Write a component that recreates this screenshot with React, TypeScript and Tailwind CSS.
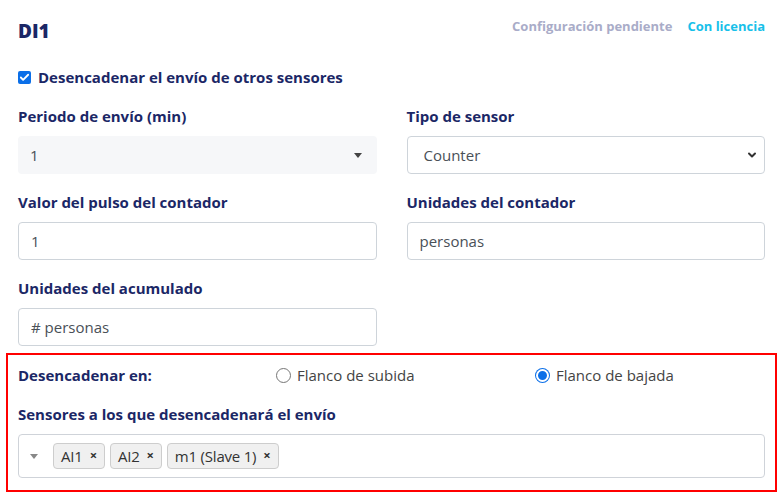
import { Check, ChevronDown } from "lucide-react";

const navy = "text-[#1b2766]";
const heading = "font-['Open_Sans',sans-serif]";

function Label({ children }: { children: React.ReactNode }) {
  return (
    <div className={`h-5 mb-[10px] text-[15px] leading-5 font-bold ${navy} ${heading}`}>
      {children}
    </div>
  );
}

function TextInput({ value }: { value: string }) {
  return (
    <div className="h-[38px] flex items-center px-[12px] border border-[#ced4da] rounded-[4px] bg-white text-[15px] text-[#495057]">
      {value}
    </div>
  );
}

function Caret({ className }: { className: string }) {
  return (
    <svg width="8" height="5" viewBox="0 0 8 5" className={className}>
      <path d="M0 0h8L4 5z" fill="currentColor" />
    </svg>
  );
}

function Tag({ label }: { label: string }) {
  return (
    <span className="h-[26px] flex items-center gap-[7px] px-[7px] border border-[#cdcdcd] rounded-[4px] bg-[#f0f0f0] text-[15px] tracking-[-0.2px] text-[#333]">
      {label}
      <span className="text-[13px] font-bold text-[#333]">×</span>
    </span>
  );
}

function Radio({ checked, label }: { checked?: boolean; label: string }) {
  return (
    <div className="flex items-center gap-[6px] text-[15px] text-[#444]">
      {checked ? (
        <span className="w-[15px] h-[15px] rounded-full bg-[#0b6fe8] flex items-center justify-center">
          <span className="w-[9px] h-[9px] rounded-full bg-[#0b6fe8] border-[2px] border-white box-content" />
        </span>
      ) : (
        <span className="w-[15px] h-[15px] rounded-full border border-[#767676] bg-white" />
      )}
      {label}
    </div>
  );
}

export default function App() {
  return (
    <div className="w-[781px] h-[503px] bg-white pl-[18px] pr-[16px] font-['Open_Sans',sans-serif] overflow-hidden">
      {/* Header */}
      <div className="flex items-center justify-between h-[60px] pt-[2px]">
        <h1 className={`text-[19px] font-extrabold ${navy} ${heading}`}>DI1</h1>
        <div className={`flex items-center gap-[15px] text-[13px] font-bold ${heading} -mt-[8px]`}>
          <span className="text-[#a9acc8]">Configuración pendiente</span>
          <span className="text-[#17c0e9]">Con licencia</span>
        </div>
      </div>

      {/* Checkbox */}
      <div className="flex items-center gap-[7px] h-[34px]">
        <span className="w-[13px] h-[13px] rounded-[2px] bg-[#0b6fe8] flex items-center justify-center">
          <Check className="w-[11px] h-[11px] text-white" strokeWidth={4} />
        </span>
        <span className={`text-[15px] font-bold ${navy} ${heading}`}>
          Desencadenar el envío de otros sensores
        </span>
      </div>

      {/* Fields */}
      <div className="grid grid-cols-2 gap-x-[30px] gap-y-[18px] mt-[12px]">
        <div>
          <Label>Periodo de envío (min)</Label>
          <div className="h-[38px] flex items-center justify-between pl-[12px] pr-[15px] rounded-[4px] bg-[#f6f7f9] text-[15px] text-[#495057]">
            1
            <Caret className="text-[#444]" />
          </div>
        </div>
        <div>
          <Label>Tipo de sensor</Label>
          <div className="h-[38px] flex items-center justify-between pl-[16px] pr-[6px] border border-[#ced4da] rounded-[4px] text-[15px] text-[#495057]">
            Counter
            <ChevronDown className="w-[12px] h-[12px] text-[#333]" strokeWidth={4} />
          </div>
        </div>
        <div>
          <Label>Valor del pulso del contador</Label>
          <TextInput value="1" />
        </div>
        <div>
          <Label>Unidades del contador</Label>
          <TextInput value="personas" />
        </div>
        <div>
          <Label>Unidades del acumulado</Label>
          <TextInput value="# personas" />
        </div>
      </div>

      {/* Highlighted section */}
      <div className="-mx-[12px] mt-[7px] border-2 border-[#ff0000] px-[10px] pt-[10px] pb-[12px]">
        <div className="flex items-center h-5">
          <div className={`w-[258px] text-[15px] font-bold ${navy} ${heading}`}>Desencadenar en:</div>
          <div className="w-[259px]">
            <Radio label="Flanco de subida" />
          </div>
          <Radio checked label="Flanco de bajada" />
        </div>
        <div className={`mt-[19px] h-5 mb-[10px] text-[15px] leading-5 font-bold ${navy} ${heading}`}>
          Sensores a los que desencadenará el envío
        </div>
        <div className="h-[44px] mt-[1px] flex items-center gap-[5px] pl-[11px] border border-[#cfd3d9] rounded-[4px]">
          <Caret className="text-[#888] mr-[10px]" />
          <Tag label="AI1" />
          <Tag label="AI2" />
          <Tag label="m1 (Slave 1)" />
        </div>
      </div>
    </div>
  );
}
